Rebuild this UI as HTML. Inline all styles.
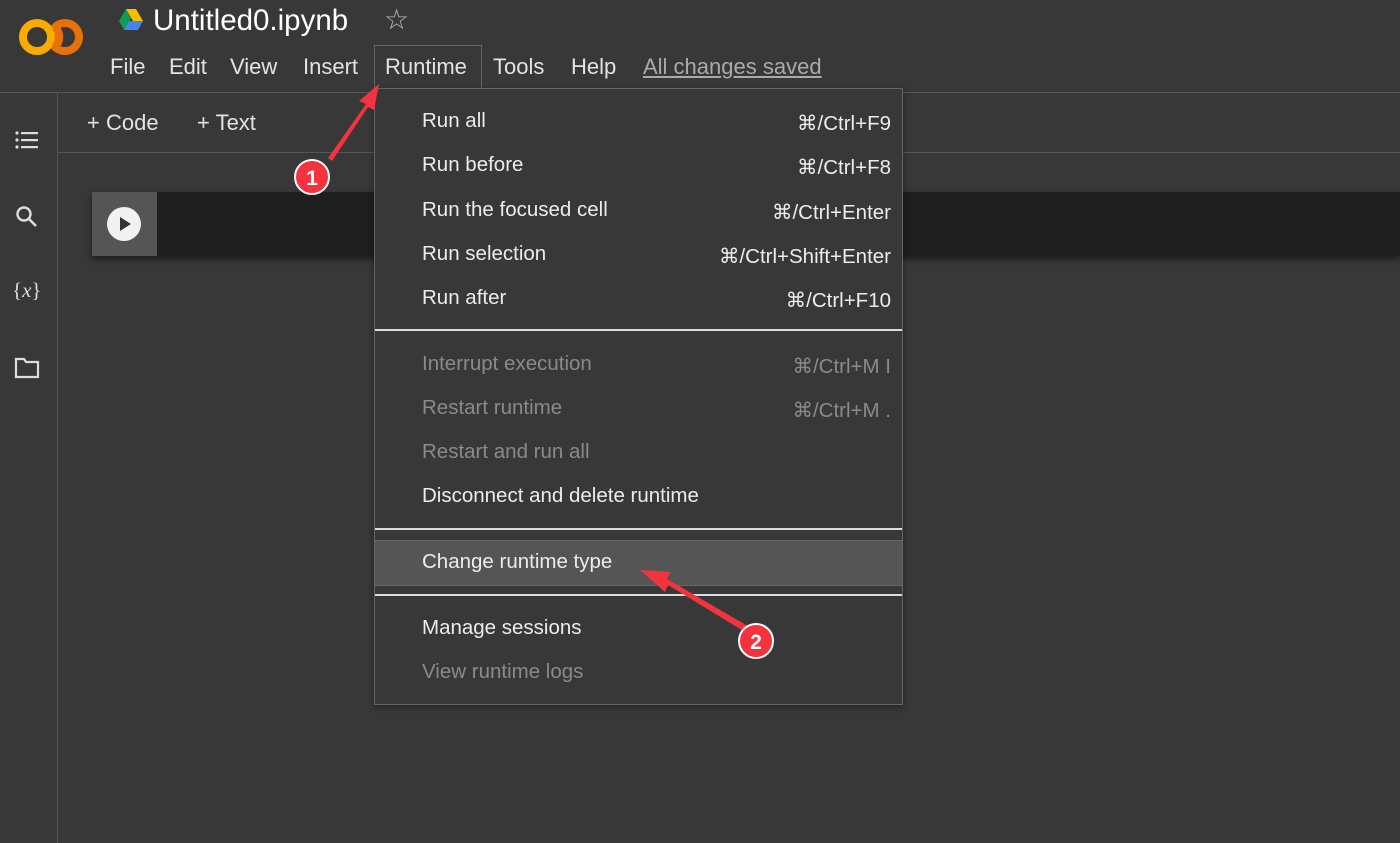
<!DOCTYPE html>
<html><head><style>
body{margin:0;width:1400px;height:843px;background:#383838;font-family:"Liberation Sans",sans-serif;color:#e8e8e8;position:relative;overflow:hidden}
.a{position:absolute}
.m{position:absolute;font-size:22px;top:54px;color:#e3e3e3}
.it{position:absolute;left:47px;font-size:20.5px;color:#ececec}
.sc{position:absolute;right:11px;font-size:20.5px;color:#ececec}
.dis{color:#8a8a8a}
.sep{position:absolute;left:0;right:0;height:2px;background:#ddd}
</style></head><body>
<div class="a" style="left:0;top:92px;width:1400px;height:1px;background:#555"></div>
<div class="a" style="left:57px;top:93px;width:1px;height:750px;background:#555"></div>
<div class="a" style="left:58px;top:152px;width:1342px;height:1px;background:#555"></div>
<svg class="a" style="left:17px;top:16px" width="68" height="42" viewBox="0 0 68 42"><circle cx="48" cy="21" r="14" fill="none" stroke="#e8710a" stroke-width="8"/><circle cx="20" cy="21" r="14" fill="none" stroke="#f9ab00" stroke-width="8"/><path d="M38 11 A14 14 0 0 1 38 31" fill="none" stroke="#e8710a" stroke-width="8"/></svg>
<svg class="a" style="left:118px;top:8px" width="26" height="24" viewBox="0 0 26 24"><path d="M8 1h10l7 12h-10z" fill="#fbbc04"/><path d="M8 1L1 13l5 9 7-12z" fill="#0f9d58"/><path d="M6 22h14l5-9H11z" fill="#4285f4"/></svg>
<div class="a" style="left:153px;top:4px;font-size:29.5px;color:#fff">Untitled0.ipynb</div>
<div class="a" style="left:384px;top:3px;font-size:28px;color:#bbb">☆</div>
<div class="m" style="left:110px">File</div><div class="m" style="left:169px">Edit</div><div class="m" style="left:230px">View</div><div class="m" style="left:303px">Insert</div>
<div class="a" style="left:374px;top:45px;width:106px;height:44px;border:1px solid #666;border-bottom:none;background:#383838"></div>
<div class="m" style="left:385px">Runtime</div><div class="m" style="left:493px">Tools</div><div class="m" style="left:571px">Help</div>
<div class="m" style="left:643px;color:#aaa;text-decoration:underline">All changes saved</div>
<div class="a" style="left:87px;top:110px;font-size:22px;color:#e3e3e3">+ Code</div>
<div class="a" style="left:197px;top:110px;font-size:22px;color:#e3e3e3">+ Text</div>
<svg class="a" style="left:15px;top:130px" width="24" height="20"><g fill="#ddd"><circle cx="2" cy="3" r="1.6"/><circle cx="2" cy="10" r="1.6"/><circle cx="2" cy="17" r="1.6"/><rect x="6" y="2" width="17" height="2.2"/><rect x="6" y="9" width="17" height="2.2"/><rect x="6" y="16" width="17" height="2.2"/></g></svg>
<svg class="a" style="left:15px;top:205px" width="24" height="24"><circle cx="9" cy="9" r="6.5" fill="none" stroke="#ddd" stroke-width="2.4"/><path d="M14 14l7 7" stroke="#ddd" stroke-width="2.6"/></svg>
<div class="a" style="left:12px;top:278px;font-size:21px;color:#ddd;font-family:'Liberation Serif',serif">{<i>x</i>}</div>
<svg class="a" style="left:14px;top:357px" width="26" height="22"><path d="M2 2h8l2 3h12v15H2z" fill="none" stroke="#ddd" stroke-width="2.2"/></svg>
<div class="a" style="left:92px;top:192px;width:1308px;height:64px;background:#1e1e1e;box-shadow:0 3px 6px rgba(0,0,0,.5)"></div>
<div class="a" style="left:92px;top:192px;width:65px;height:64px;background:#555"></div>
<svg class="a" style="left:107px;top:207px" width="34" height="34"><circle cx="17" cy="17" r="17" fill="#f1f1f1"/><path d="M13 10v14l11-7z" fill="#333"/></svg>
<div class="a" style="left:374px;top:88px;width:527px;height:615px;background:#383838;border:1px solid #666;box-shadow:0 2px 6px rgba(0,0,0,.4)">
<div class="it" style="top:20px">Run all</div><div class="sc" style="top:22px">⌘/Ctrl+F9</div>
<div class="it" style="top:64px">Run before</div><div class="sc" style="top:66px">⌘/Ctrl+F8</div>
<div class="it" style="top:109px">Run the focused cell</div><div class="sc" style="top:111px">⌘/Ctrl+Enter</div>
<div class="it" style="top:153px">Run selection</div><div class="sc" style="top:155px">⌘/Ctrl+Shift+Enter</div>
<div class="it" style="top:197px">Run after</div><div class="sc" style="top:199px">⌘/Ctrl+F10</div>
<div class="sep" style="top:240px"></div>
<div class="it dis" style="top:263px">Interrupt execution</div><div class="sc dis" style="top:265px">⌘/Ctrl+M I</div>
<div class="it dis" style="top:307px">Restart runtime</div><div class="sc dis" style="top:309px">⌘/Ctrl+M .</div>
<div class="it dis" style="top:351px">Restart and run all</div>
<div class="it" style="top:395px">Disconnect and delete runtime</div>
<div class="sep" style="top:439px"></div>
<div class="a" style="left:0;right:0;top:451px;height:44px;background:#555;border-top:1px dotted #777;border-bottom:1px dotted #777"></div>
<div class="it" style="top:461px">Change runtime type</div>
<div class="sep" style="top:505px"></div>
<div class="it" style="top:527px">Manage sessions</div>
<div class="it dis" style="top:571px">View runtime logs</div>
</div>
<svg class="a" style="left:0;top:0" width="1400" height="843">
<g fill="#f5333f"><path d="M328 158L366 104L359 101L379 84L374 110L368 107L332 161z"/><circle cx="312" cy="177" r="17" stroke="#fff" stroke-width="2"/>
<path d="M755 638L668 585L665 592L640 570L670 572L667 579L758 632z"/><circle cx="756" cy="641" r="17" stroke="#fff" stroke-width="2"/></g>
<text x="312" y="185" fill="#fff" font-size="21" font-weight="bold" text-anchor="middle" font-family="Liberation Sans">1</text>
<text x="756" y="649" fill="#fff" font-size="21" font-weight="bold" text-anchor="middle" font-family="Liberation Sans">2</text>
</svg>
</body></html>
